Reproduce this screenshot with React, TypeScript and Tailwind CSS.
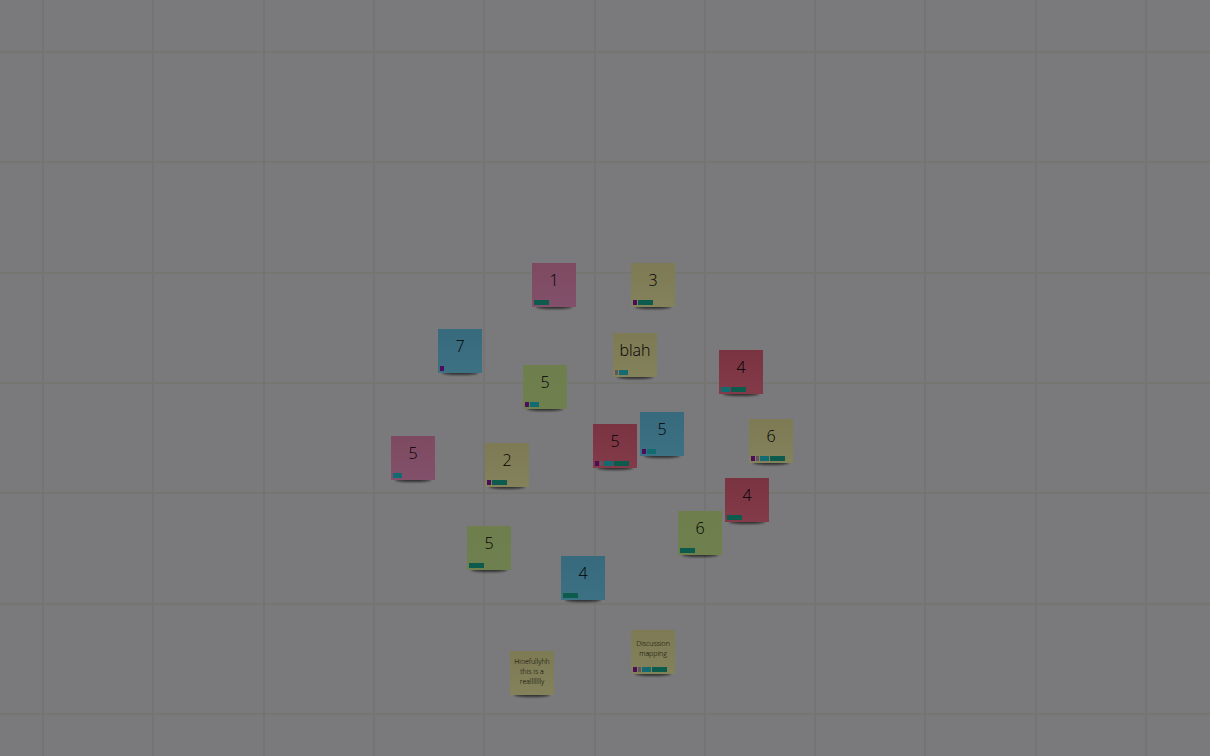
import React from "react";

type Tag = "purple" | "grey" | "teal" | "green";
type Color = "pink" | "yellow" | "blue" | "lime" | "red";

interface NoteData {
  x: number;
  y: number;
  color: Color;
  text: string;
  tags: Tag[];
  small?: boolean;
}

const notes: NoteData[] = [
  { x: 532, y: 263, color: "pink", text: "1", tags: ["green"] },
  { x: 631, y: 263, color: "yellow", text: "3", tags: ["purple", "green"] },
  { x: 438, y: 329, color: "blue", text: "7", tags: ["purple"] },
  { x: 613, y: 333, color: "yellow", text: "blah", tags: ["grey", "teal"] },
  { x: 719, y: 350, color: "red", text: "4", tags: ["teal", "green"] },
  { x: 523, y: 365, color: "lime", text: "5", tags: ["purple", "teal"] },
  { x: 640, y: 412, color: "blue", text: "5", tags: ["purple", "teal"] },
  { x: 593, y: 424, color: "red", text: "5", tags: ["purple", "grey", "teal", "green"] },
  { x: 749, y: 419, color: "yellow", text: "6", tags: ["purple", "grey", "teal", "green"] },
  { x: 391, y: 436, color: "pink", text: "5", tags: ["teal"] },
  { x: 485, y: 443, color: "yellow", text: "2", tags: ["purple", "green"] },
  { x: 725, y: 478, color: "red", text: "4", tags: ["green"] },
  { x: 678, y: 511, color: "lime", text: "6", tags: ["green"] },
  { x: 467, y: 526, color: "lime", text: "5", tags: ["green"] },
  { x: 561, y: 556, color: "blue", text: "4", tags: ["green"] },
  { x: 631, y: 630, color: "yellow", text: "Discussion mapping", tags: ["purple", "grey", "teal", "green"], small: true },
  { x: 510, y: 651, color: "yellow", text: "Hioefullyhh this is a reallllllly", tags: [], small: true },
];

const noteColors: Record<Color, string> = {
  pink: "from-[#7e4a61] to-[#82506a]",
  yellow: "from-[#7d7a54] to-[#83825b]",
  blue: "from-[#386a7d] to-[#3c7083]",
  lime: "from-[#6e7e4d] to-[#6f804f]",
  red: "from-[#7a3340] to-[#833b4a]",
};

const tagColors: Record<Tag, string> = {
  purple: "w-1 bg-[#4b0d5c]",
  grey: "w-[3px] bg-[#5f565c]",
  teal: "w-[9px] bg-[#116b70]",
  green: "w-[15px] bg-[#0d5b4d]",
};

const GRID_COLUMNS = 12;
const GRID_ROWS = 8;

const Note = ({ note }: { note: NoteData }) => (
  <article className="absolute size-11" style={{ left: note.x, top: note.y }}>
    {/* soft shadow under the bottom edge */}
    <div className="absolute inset-x-1 -bottom-[2px] h-1 rounded-[50%] bg-black/60 blur-[1px]" />
    <div className={`relative flex h-full flex-col bg-linear-to-b ${noteColors[note.color]}`}>
      <div className="flex flex-1 items-center justify-center">
        <p
          className={
            note.small
              ? "w-10 text-center text-[7px] leading-[10px] font-light text-black"
              : "pb-[3px] text-base leading-5 font-light text-black"
          }
        >
          {note.text}
        </p>
      </div>
      {note.tags.length > 0 ? (
        <div className="mb-[2px] flex h-[5px] gap-px pl-[2px]">
          {note.tags.map((tag) => (
            <span key={tag} className={`h-full ${tagColors[tag]}`} />
          ))}
        </div>
      ) : (
        <div className="h-[2px]" />
      )}
    </div>
  </article>
);

const App = () => {
  return (
    <main className="relative grid h-screen w-full grid-cols-[44px_repeat(10,1fr)_63px] grid-rows-[53px_repeat(6,1fr)_41px] overflow-hidden bg-[#7a7a7c] font-['Open_Sans',sans-serif]">
      {Array.from({ length: GRID_COLUMNS * GRID_ROWS }, (_, i) => (
        <div key={i} className="border-r-2 border-b-2 border-r-[#747473] border-b-[#757572] nth-[12n]:border-r-0 nth-[n+85]:border-b-0" />
      ))}
      {notes.map((note) => (
        <Note key={`${note.x}-${note.y}`} note={note} />
      ))}
    </main>
  );
};

export default App;
